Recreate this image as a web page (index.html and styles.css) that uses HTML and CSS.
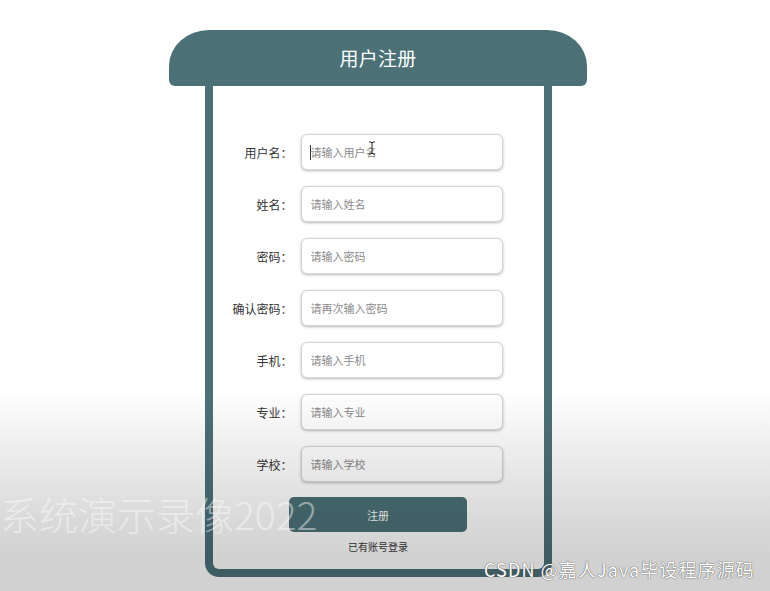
FILE: index.html
```html
<!DOCTYPE html>
<html lang="zh">
<head>
<meta charset="utf-8">
<title>用户注册</title>
<link rel="stylesheet" href="styles.css">
</head>
<body>
<div class="page">
  <div class="card">
    <div class="card-head">用户注册</div>
    <div class="card-body">
      <form class="form">
        <div class="rows">
          <label class="lbl">用户名：</label><input class="field" placeholder="请输入用户名">
          <label class="lbl">姓名：</label><input class="field" placeholder="请输入姓名">
          <label class="lbl">密码：</label><input class="field" type="password" placeholder="请输入密码">
          <label class="lbl">确认密码：</label><input class="field" type="password" placeholder="请再次输入密码">
          <label class="lbl">手机：</label><input class="field" placeholder="请输入手机">
          <label class="lbl">专业：</label><input class="field" placeholder="请输入专业">
          <label class="lbl">学校：</label><input class="field" placeholder="请输入学校">
        </div>
        <button class="btn" type="button">注册</button>
        <a class="link">已有账号登录</a>
      </form>
    </div>
  </div>
  <div class="caret"></div>
  <svg class="ibeam" width="8" height="14" viewBox="0 0 8 14"><path d="M1 1h2l1 1 1-1h2M4 2v10M1 13h2l1-1 1 1h2" fill="none" stroke="#222" stroke-width="1"/></svg>
  <div class="shade"></div>
  <div class="wm-left">系统演示录像2022</div>
  <div class="wm-right">CSDN @嘉人Java毕设程序源码</div>
</div>
</body>
</html>
```
FILE: styles.css
```css
html, body {
  margin: 0;
  padding: 0;
  background: #fff;
}
.page {
  position: relative;
  width: 770px;
  height: 591px;
  overflow: hidden;
  font-family: "Noto Sans CJK SC", "Noto Sans", sans-serif;
}
.card {
  width: 418px;
  margin: 30px 0 0 169px;
  display: flex;
  flex-direction: column;
  align-items: center;
}
.card-head {
  width: 100%;
  height: 56px;
  background: #4b7177;
  border-radius: 40px 40px 6px 6px / 36px 36px 6px 6px;
  color: #fff;
  font-size: 19px;
  line-height: 56px;
  text-align: center;
  letter-spacing: 0.3px;
}
.card-body {
  box-sizing: border-box;
  width: 347px;
  height: 491px;
  border: 8px solid #4b7177;
  border-top: 0;
  border-radius: 0 0 14px 14px;
  background: #fff;
}
.form {
  display: flex;
  flex-direction: column;
  align-items: center;
  padding-top: 48px;
  margin: 0;
}
.rows {
  display: grid;
  grid-template-columns: 80px 202px;
  column-gap: 8px;
  row-gap: 16px;
  align-items: center;
  align-self: flex-start;
}
.lbl {
  text-align: right;
  font-size: 12px;
  color: #333;
}
.field {
  box-sizing: border-box;
  width: 202px;
  height: 36px;
  border: 1px solid #d4d4d4;
  border-radius: 6px;
  box-shadow: 0 1px 3px rgba(0, 0, 0, 0.28);
  background: #fff;
  padding: 0 9px;
  font-family: "Noto Sans CJK SC", "Noto Sans", sans-serif;
  font-size: 11px;
  outline: none;
}
.field::placeholder {
  color: #8a8a8a;
}
.btn {
  margin-top: 15px;
  width: 178px;
  height: 35px;
  border: 0;
  border-radius: 5px;
  background: #4b7177;
  color: #fff;
  font-family: "Noto Sans CJK SC", "Noto Sans", sans-serif;
  font-size: 11px;
}
.link {
  margin-top: 8px;
  font-size: 10px;
  line-height: 14px;
  color: #3a3a3a;
}
.caret {
  position: absolute;
  left: 310px;
  top: 145px;
  width: 1px;
  height: 15px;
  background: #333;
}
.ibeam {
  position: absolute;
  left: 368px;
  top: 141px;
}
.shade {
  position: absolute;
  inset: 0;
  pointer-events: none;
  background: linear-gradient(to bottom, rgba(0,0,0,0) 0, rgba(0,0,0,0) 388px, rgba(0,0,0,0.06) 440px, rgba(0,0,0,0.15) 520px, rgba(0,0,0,0.18) 560px, rgba(0,0,0,0.18) 591px);
}
.wm-left {
  position: absolute;
  left: 0;
  top: 487px;
  font-size: 39px;
  line-height: 52px;
  font-weight: 300;
  color: rgba(255, 255, 255, 0.45);
  white-space: nowrap;
}
.wm-right {
  position: absolute;
  left: 484px;
  top: 557px;
  font-size: 18px;
  line-height: 24px;
  letter-spacing: 1.1px;
  color: #fff;
  white-space: nowrap;
  text-shadow: 0 0 1px #555, 0 0 1px #555;
}
```
